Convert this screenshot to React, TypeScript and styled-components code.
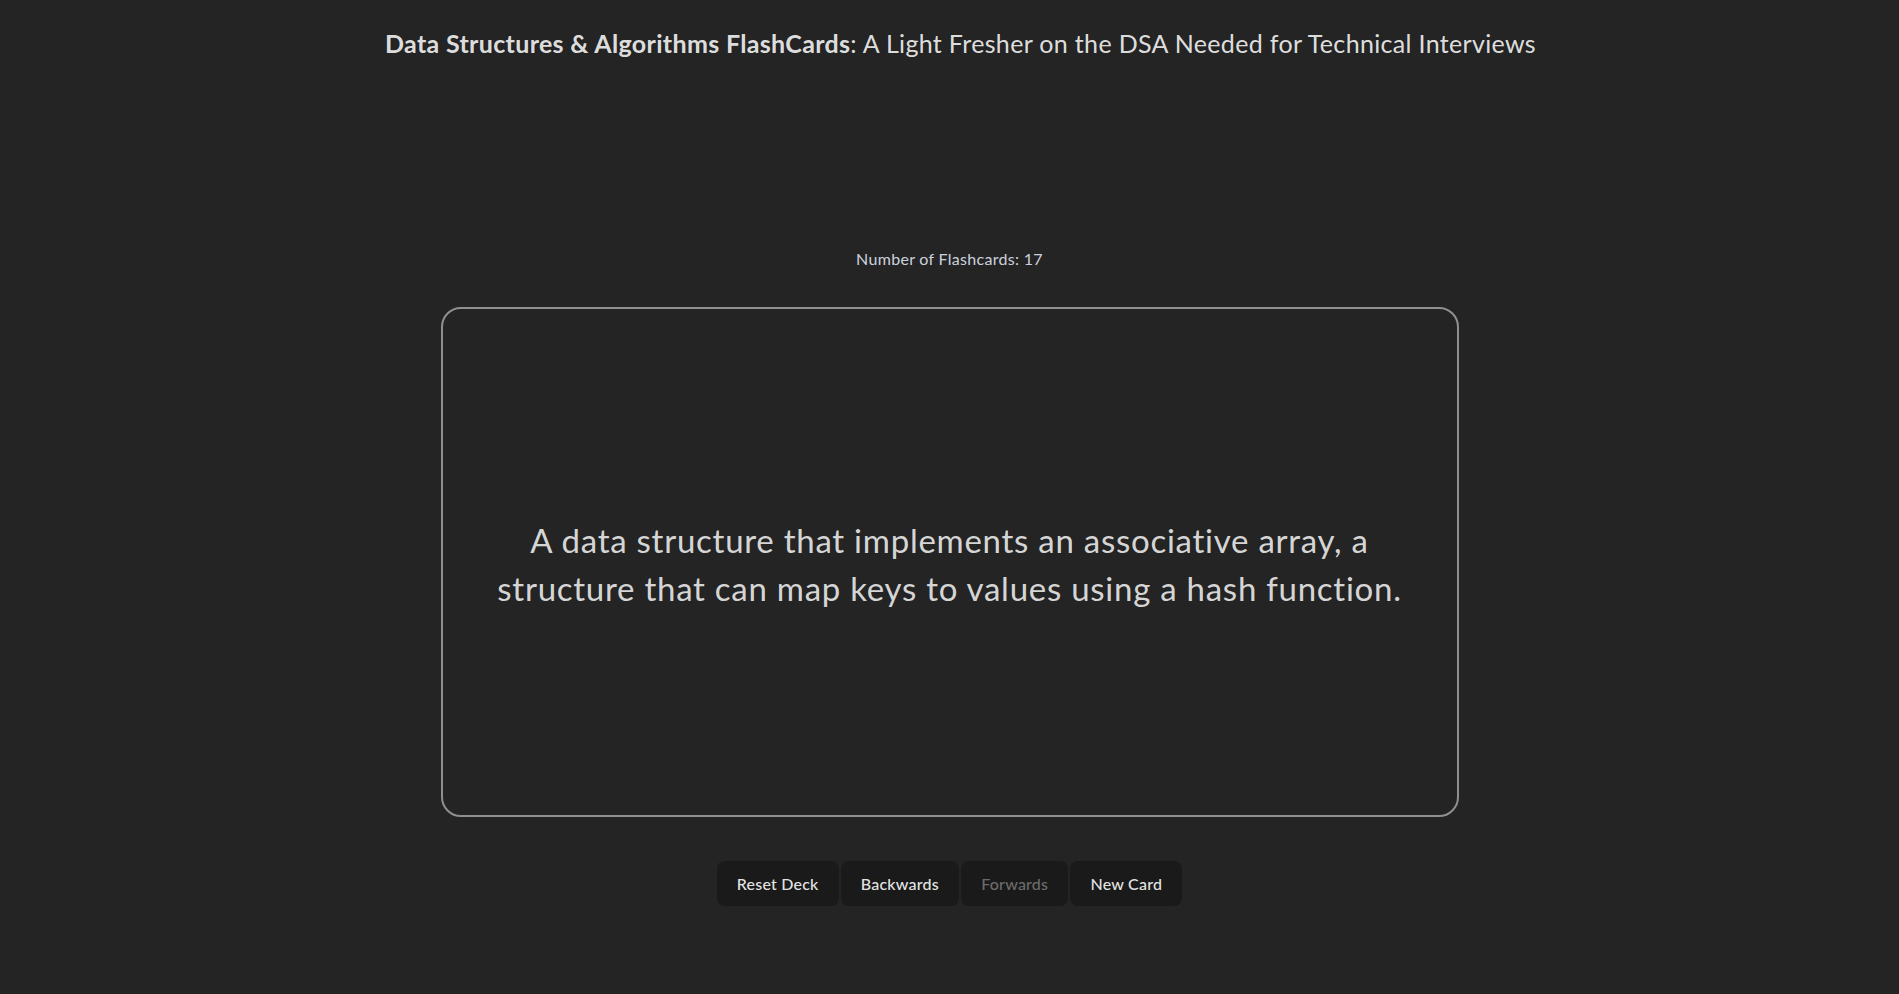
import React from 'react';
import styled, { createGlobalStyle } from 'styled-components';

const GlobalStyle = createGlobalStyle`
  html, body {
    margin: 0;
    padding: 0;
    background: #242424;
  }
  body {
    font-family: Lato, 'Liberation Sans', sans-serif;
    line-height: 1.5;
    color: rgba(255, 255, 255, 0.87);
    -webkit-font-smoothing: antialiased;
  }
`;

const Page = styled.main`
  min-height: 100vh;
  display: flex;
  flex-direction: column;
  align-items: center;
  padding-top: 25px;
  box-sizing: border-box;
`;

const Title = styled.h1`
  margin: 0;
  font-size: 25px;
  font-weight: 400;
  line-height: 36px;
  letter-spacing: 0.33px;
  color: rgba(255, 255, 255, 0.87);
  transform: translateX(11px);

  strong {
    font-weight: 700;
  }
`;

const CardCount = styled.p`
  margin: 186px 0 0;
  font-size: 16px;
  line-height: 24px;
  letter-spacing: 0.3px;
  color: rgba(225, 232, 245, 0.9);
`;

const Card = styled.div`
  margin-top: 36px;
  width: 1018px;
  height: 510px;
  box-sizing: border-box;
  border: 2px solid #8f8f8f;
  border-radius: 20px;
  display: flex;
  align-items: center;
  justify-content: center;
  padding: 4px 40px 0;
  cursor: pointer;
`;

const CardText = styled.p`
  margin: 0;
  font-size: 33px;
  line-height: 48px;
  letter-spacing: 0.74px;
  text-align: center;
  color: rgba(255, 255, 255, 0.83);
`;

const Controls = styled.div`
  margin-top: 44px;
  display: flex;
  gap: 2px;
`;

const Button = styled.button`
  font-family: inherit;
  font-size: 16px;
  font-weight: 500;
  line-height: 24px;
  letter-spacing: 0.2px;
  padding: 9.6px 19.2px;
  border: 1px solid transparent;
  border-radius: 8px;
  background: #1a1a1a;
  color: ${props => (props.disabled ? '#6b6b6b' : 'rgba(255, 255, 255, 0.9)')};
  cursor: ${props => (props.disabled ? 'default' : 'pointer')};
`;

export default function App() {
  const total = 17;

  return (
    <>
      <GlobalStyle />
      <Page>
        <Title>
          <strong>Data Structures &amp; Algorithms FlashCards</strong>: A Light Fresher on the DSA Needed for Technical Interviews
        </Title>
        <CardCount>Number of Flashcards: {total}</CardCount>
        <Card>
          <CardText>
            A data structure that implements an associative array, a structure that can map keys to values using a hash function.
          </CardText>
        </Card>
        <Controls>
          <Button>Reset Deck</Button>
          <Button>Backwards</Button>
          <Button disabled>Forwards</Button>
          <Button>New Card</Button>
        </Controls>
      </Page>
    </>
  );
}
